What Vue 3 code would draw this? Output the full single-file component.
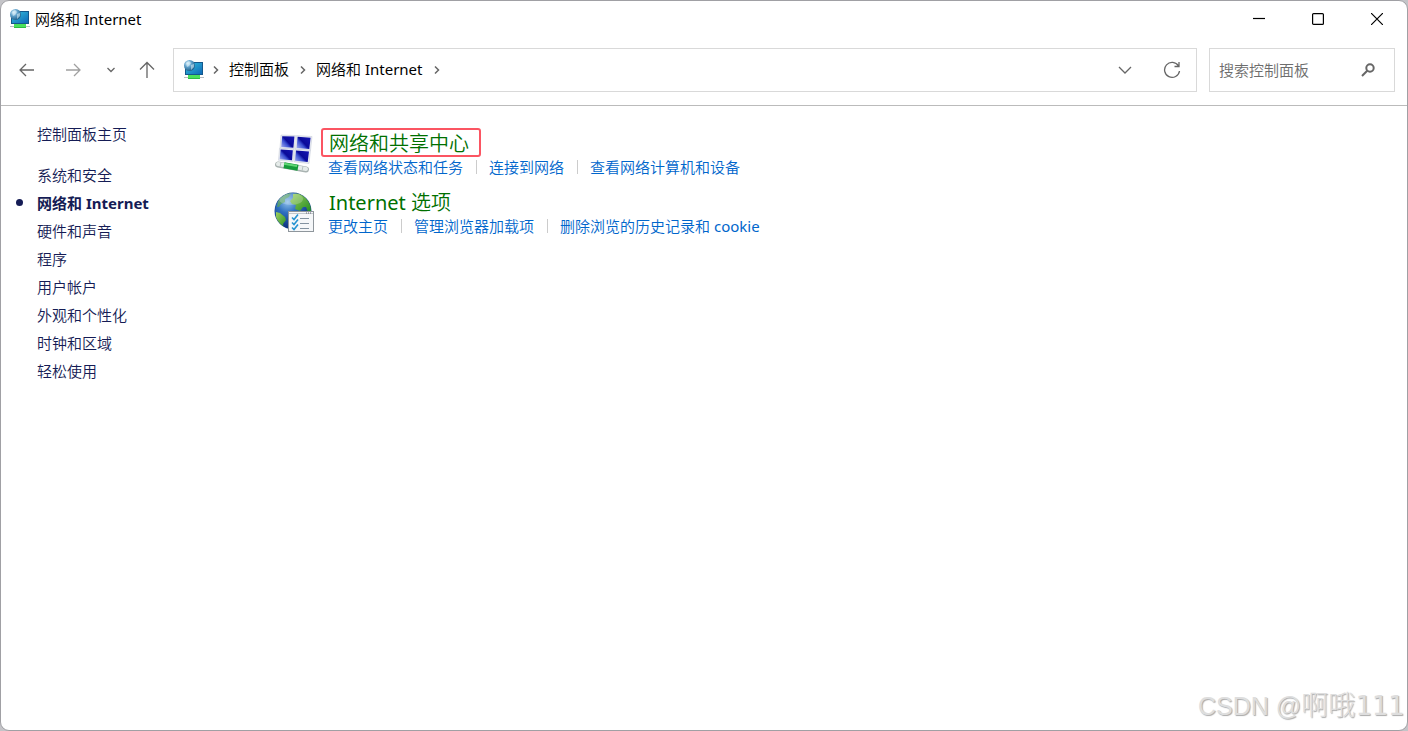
<script setup>
import { ref } from 'vue'

const keyword = ref('')
const current = ref('网络和 Internet')

const categories = [
  '系统和安全',
  '网络和 Internet',
  '硬件和声音',
  '程序',
  '用户帐户',
  '外观和个性化',
  '时钟和区域',
  '轻松使用'
]

const crumbs = ['控制面板', '网络和 Internet']

const sections = [
  {
    icon: 'network',
    title: '网络和共享中心',
    marked: true,
    links: ['查看网络状态和任务', '连接到网络', '查看网络计算机和设备']
  },
  {
    icon: 'internet',
    title: 'Internet 选项',
    marked: false,
    links: ['更改主页', '管理浏览器加载项', '删除浏览的历史记录和 cookie']
  }
]
</script>

<template>
  <div class="desktop">
    <svg class="defs" aria-hidden="true">
      <defs>
        <linearGradient id="screen" x1="0" y1="0" x2="1" y2="1">
          <stop offset="0" stop-color="#35c0dc" />
          <stop offset="1" stop-color="#0f69b8" />
        </linearGradient>
        <radialGradient id="ball" cx="0.35" cy="0.3" r="0.7">
          <stop offset="0" stop-color="#d5eefa" />
          <stop offset="0.5" stop-color="#5e9fc9" />
          <stop offset="1" stop-color="#24648f" />
        </radialGradient>
        <linearGradient id="pane" x1="0" y1="1" x2="1" y2="0.2">
          <stop offset="0" stop-color="#a9b4f2" />
          <stop offset="0.4" stop-color="#3a4fd2" />
          <stop offset="0.55" stop-color="#0a0a98" />
          <stop offset="1" stop-color="#1414b0" />
        </linearGradient>
        <radialGradient id="ocean" cx="0.35" cy="0.25" r="0.75">
          <stop offset="0" stop-color="#8fc0ea" />
          <stop offset="0.4" stop-color="#2f70c0" />
          <stop offset="1" stop-color="#0a2a7a" />
        </radialGradient>
        <linearGradient id="land" x1="0" y1="0" x2="1" y2="1">
          <stop offset="0" stop-color="#9fd060" />
          <stop offset="1" stop-color="#1f8a20" />
        </linearGradient>
        <clipPath id="globe-clip"><circle cx="19" cy="19" r="18" /></clipPath>
        <symbol id="monitor" viewBox="0 0 20 20">
          <rect x="0" y="17" width="20" height="1" fill="#b9bec2" />
          <rect x="4" y="15" width="12" height="4" fill="#4be05c" />
          <rect x="4" y="18" width="12" height="1" fill="#2dbb45" />
          <rect x="1" y="2" width="18" height="13" fill="#14588c" />
          <rect x="2" y="3" width="16" height="11" fill="url(#screen)" />
          <circle cx="5.5" cy="5.5" r="5.5" fill="url(#ball)" />
          <path d="M2 3l3-2 2 2-2 3-2 1zM7 5l3-1v3l-3 3z" fill="#e0f2fa" opacity="0.55" />
        </symbol>
      </defs>
    </svg>

    <div class="window">
      <header class="titlebar">
        <svg class="app-icon"><use href="#monitor" /></svg>
        <span class="caption">网络和 Internet</span>
        <div class="controls">
          <button type="button" aria-label="最小化">
            <svg width="12" height="12" viewBox="0 0 12 12"><path d="M0 5.5h12" /></svg>
          </button>
          <button type="button" aria-label="最大化">
            <svg width="12" height="12" viewBox="0 0 12 12">
              <rect x="0.6" y="0.6" width="10.8" height="10.8" rx="1" />
            </svg>
          </button>
          <button type="button" aria-label="关闭">
            <svg width="12" height="12" viewBox="0 0 12 12"><path d="M0 0l12 12M12 0L0 12" /></svg>
          </button>
        </div>
      </header>

      <nav class="toolbar">
        <div class="history">
          <button type="button" class="back" aria-label="后退">
            <svg width="16" height="14" viewBox="0 0 16 14"><path d="M15 7H1M7 1L1 7l6 6" /></svg>
          </button>
          <button type="button" class="forward" aria-label="前进">
            <svg width="16" height="14" viewBox="0 0 16 14"><path d="M1 7h14M9 1l6 6-6 6" /></svg>
          </button>
          <button type="button" class="recent" aria-label="最近浏览的位置">
            <svg width="8" height="6" viewBox="0 0 8 6"><path d="M0.5 1L4 4.5 7.5 1" /></svg>
          </button>
          <button type="button" class="up" aria-label="上移">
            <svg width="16" height="18" viewBox="0 0 16 18"><path d="M8 17V1.5M1 8.5l7-7 7 7" /></svg>
          </button>
        </div>

        <div class="address">
          <svg class="app-icon"><use href="#monitor" /></svg>
          <svg class="sep" width="6" height="8" viewBox="0 0 6 8"><path d="M1 0.5L4.5 4 1 7.5" /></svg>
          <template v-for="name in crumbs" :key="name">
            <a href="#">{{ name }}</a>
            <svg class="sep" width="6" height="8" viewBox="0 0 6 8"><path d="M1 0.5L4.5 4 1 7.5" /></svg>
          </template>
          <button type="button" class="drop" aria-label="以前的位置">
            <svg width="14" height="8" viewBox="0 0 14 8"><path d="M1 1l6 6 6-6" /></svg>
          </button>
          <button type="button" class="refresh" aria-label="刷新">
            <svg width="18" height="18" viewBox="0 0 18 18">
              <path d="M15.5 5A7.5 7.5 0 1 0 16.500 10M16 1v4.500h-4.500" />
            </svg>
          </button>
        </div>

        <form class="search" @submit.prevent>
          <input v-model="keyword" type="text" placeholder="搜索控制面板" aria-label="搜索控制面板" />
          <button type="submit" aria-label="搜索">
            <svg width="14" height="14" viewBox="0 0 14 14">
              <circle cx="9" cy="5" r="3.7" />
              <path d="M6.2 7.8L1 13" />
            </svg>
          </button>
        </form>
      </nav>

      <div class="body">
        <aside class="sidebar">
          <a class="home" href="#">控制面板主页</a>
          <ul>
            <li v-for="name in categories" :key="name" :class="{ active: name === current }">
              <a href="#" @click.prevent="current = name">{{ name }}</a>
            </li>
          </ul>
        </aside>

        <main class="content">
          <section v-for="item in sections" :key="item.icon" class="section">
            <svg v-if="item.icon === 'network'" class="icon" viewBox="0 0 40 40">
              <g fill="#e6e9f2" stroke="#c3c8d4" stroke-width="0.5">
                <path d="M7 2l14.500.5-1.200 13.500-14.300-.8z" />
                <path d="M22.500 2.500l15.500 1-1.500 13.800-15-1.200z" />
                <path d="M5.500 15.200l14.500.8-1 12.500-14.500-1.200z" />
                <path d="M21 16.200l15.500 1-1.500 13.300-15-1.700z" />
              </g>
              <g fill="url(#pane)">
                <path d="M8.200 3.200l12.200.4-1 11.200-12.200-.7z" />
                <path d="M23.600 3.800l13 .9-1.300 11.300-12.700-1z" />
                <path d="M6.600 16.500l12.200.7-.8 10.100-12.300-1z" />
                <path d="M22 17.500l13 .9-1.300 10.700-12.700-1.400z" />
              </g>
              <path d="M4 31.500l28 5" stroke="#a9b3b1" stroke-width="6" stroke-linecap="round" />
              <path d="M4 31l28 5" stroke="#e6ecea" stroke-width="4" stroke-linecap="round" />
              <path d="M10 32.200l14 2.500" stroke="#159b3a" stroke-width="6" />
              <path d="M10 30.800l13 2.300" stroke="#60d674" stroke-width="2" />
              <path d="M7 29l-1 5M29 33l-1 5" stroke="#b9c3c2" />
            </svg>
            <svg v-else class="icon" viewBox="0 0 40 40">
              <circle cx="19" cy="19" r="18.500" fill="#1a4c91" />
              <g clip-path="url(#globe-clip)">
                <circle cx="19" cy="19" r="18" fill="url(#ocean)" />
                <path d="M4 9l3-4 6-4 4 0-2 4-4 2 0 3-4 2-2 3-2 0z" fill="url(#land)" opacity="0.6" />
                <path d="M2 20l4 1 5 4 1 3-3 4 1 5-5-3-3-7z" fill="url(#land)" />
                <path d="M19 2l7-1 6 4 5 6 1 8-4 1-2-5-3 0-3 4-5-2 1-4-4-1-2-3 3-3z" fill="url(#land)" />
                <ellipse cx="17" cy="7" rx="12" ry="6" fill="#fff" opacity="0.22" />
              </g>
              <rect x="14.500" y="19.500" width="25" height="20" fill="#f5f7f9" stroke="#8f969c" />
              <path d="M15 21.500h24" stroke="#c1c7cc" />
              <path d="M32 21h1M34 21h1M36 21h1" stroke="#667" />
              <path d="M26 26.500h9M26 31.500h9M26 36.500h9" stroke="#8292a0" />
              <path
                d="M18 25.500l2 2 4-5M18 30.500l2 2 4-5M18 35.500l2 2 4-5"
                fill="none"
                stroke="#2693d1"
                stroke-width="1.6"
              />
            </svg>
            <div class="info">
              <h2 :class="{ marked: item.marked }"><a href="#">{{ item.title }}</a></h2>
              <ul class="links">
                <li v-for="link in item.links" :key="link"><a href="#">{{ link }}</a></li>
              </ul>
            </div>
          </section>
        </main>
      </div>
    </div>
    <div class="watermark">CSDN @<span class="cjk">啊哦</span><span class="num">111</span></div>
  </div>
</template>

<style>
body {
  background: #c4c4c8;
}
</style>

<style scoped>
.desktop {
  position: relative;
  display: flex;
  min-height: 100vh;
  box-sizing: border-box;
  font-family: 'Noto Sans', 'Noto Sans CJK SC DemiLight', 'Noto Sans CJK SC', sans-serif;
  font-size: 15px;
  color: #000;
}
.defs {
  position: absolute;
  width: 0;
  height: 0;
}
.window {
  flex: 1;
  display: flex;
  flex-direction: column;
  background: #fff;
  border: 1px solid #a0a0a4;
  border-radius: 9px;
}
a {
  color: inherit;
  text-decoration: none;
}
ul {
  list-style: none;
  margin: 0;
  padding: 0;
}
button {
  display: flex;
  align-items: center;
  justify-content: center;
  padding: 0;
  border: 0;
  background: none;
}
button svg,
.sep {
  fill: none;
  stroke: #666;
  stroke-width: 1.3;
}
.app-icon {
  width: 20px;
  height: 20px;
  flex: none;
}

.titlebar {
  display: flex;
  align-items: center;
  height: 36px;
  padding-left: 9px;
}
.caption {
  margin-left: 5px;
  padding-bottom: 2px;
}
.controls {
  display: flex;
  height: 100%;
  margin-left: auto;
  padding-right: 1px;
}
.controls button {
  width: 59px;
}
.controls button svg {
  stroke: #000;
  stroke-width: 1.2;
}

.toolbar {
  display: flex;
  align-items: center;
  gap: 12px;
  height: 44px;
  padding: 11px 12px 13px 0;
  border-bottom: 1px solid #bbb;
}
.history {
  display: flex;
  width: 160px;
  height: 100%;
}
.history button {
  flex: none;
}
.back,
.forward {
  width: 46px;
}
.back {
  margin-left: 3px;
}
.forward svg {
  stroke: #a0a0a0;
}
.recent {
  width: 29px;
}
.up {
  width: 44px;
}
.address,
.search {
  display: flex;
  align-items: center;
  box-sizing: border-box;
  height: 44px;
  border: 1px solid #d9d9d9;
}
.address {
  flex: 1;
  padding-left: 10px;
}
.address .app-icon {
  margin-right: 9px;
}
.address a {
  margin: 0 11px 0 10px;
  padding-bottom: 3px;
}
.sep {
  stroke-width: 1.5;
}
.drop {
  width: 46px;
  height: 100%;
  margin-left: auto;
}
.refresh {
  width: 48px;
  height: 100%;
}
.search {
  width: 186px;
}
.search input {
  flex: 1;
  min-width: 0;
  padding: 0 0 0 9px;
  border: 0;
  outline: 0;
  background: none;
  font: inherit;
}
.search input::placeholder {
  color: #6d6d6d;
  opacity: 1;
}
.search button {
  width: 52px;
  height: 100%;
}
.search button svg {
  stroke-width: 2;
}

.body {
  flex: 1;
  display: flex;
}
.sidebar {
  width: 237px;
  padding: 14px 0 0 36px;
  box-sizing: border-box;
  flex: none;
  line-height: 28px;
  color: #151c55;
}
.home {
  display: block;
  margin-bottom: 13px;
}
.sidebar li {
  position: relative;
  height: 28px;
}
.sidebar .active {
  font-family: 'Noto Sans', 'Noto Sans CJK SC', sans-serif;
  font-weight: bold;
}
.sidebar .active::before {
  content: '';
  position: absolute;
  left: -21px;
  top: 10px;
  width: 7px;
  height: 7px;
  border-radius: 50%;
  background: #151c55;
}

.content {
  flex: 1;
  padding: 24px 36px;
}
.section {
  display: flex;
  height: 59px;
}
.icon {
  width: 40px;
  height: 40px;
  margin: 3px 14px 0 0;
  flex: none;
  fill: none;
}
h2 {
  position: relative;
  width: fit-content;
  margin: 1px 0 0 1px;
  font-size: 20px;
  font-weight: normal;
  line-height: 26px;
  color: #007000;
}
.marked::after {
  content: '';
  position: absolute;
  inset: -3px -12px 0 -8px;
  border: 2px solid #fb5562;
  border-radius: 3px;
}
.links {
  display: flex;
  line-height: 20px;
  color: #0066cc;
}
.links li {
  display: flex;
  align-items: center;
}
.links li + li::before {
  content: '';
  width: 1px;
  height: 14px;
  margin: 0 12px 0 13px;
  background: #ccc;
}

.watermark {
  position: absolute;
  right: 4px;
  bottom: 7px;
  display: flex;
  align-items: baseline;
  white-space: pre;
  font-family: 'Liberation Sans', sans-serif;
  font-size: 25px;
  line-height: 36px;
  color: #dedede;
  text-shadow: 1px 1px 1px #aaa;
}
.cjk {
  font-family: 'Noto Sans CJK SC', sans-serif;
  font-size: 27px;
  font-weight: 300;
}
.num {
  font-family: 'DejaVu Sans Mono', monospace;
  font-size: 27px;
}
</style>
